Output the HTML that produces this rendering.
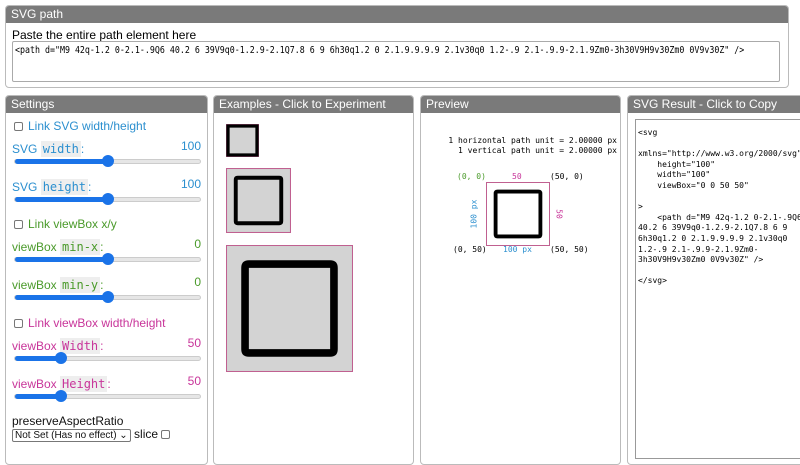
<!DOCTYPE html>
<html><head><style>
*{box-sizing:border-box}
body{margin:0;width:800px;height:450px;overflow:hidden;background:#fff;font-family:"Liberation Sans",sans-serif;font-size:12px;position:relative}
.panel{position:absolute;border:1px solid #bbb;border-radius:4px;background:#fff;overflow:hidden}
.hd{background:#7a7a7a;color:#fff;height:17px;line-height:17px;padding-left:5px;font-size:12px}
.mono{font-family:"DejaVu Sans Mono",monospace}
.row{position:absolute;left:6px;right:6px}
.lab{font-size:12px}
.code{font-family:"DejaVu Sans Mono",monospace;background:#eee;padding:1px 2px}
.val{position:absolute;right:0;top:-3px}
.sl{position:absolute;left:2px;right:0;top:17px;height:5px;background:#e6e6e6;border:1px solid #ccc;border-radius:3px}
.sl i{position:absolute;left:0;top:-1px;height:5px;background:#1a73e8;border-radius:3px}
.sl b{position:absolute;top:-5px;width:12px;height:12px;border-radius:50%;background:#1a73e8;margin-left:-6px}
.cb{display:inline-block;width:9px;height:9px;border:1px solid #777;border-radius:2px;vertical-align:-1px;margin-right:5px;margin-left:2px}
.pl{position:absolute;font-family:"DejaVu Sans Mono",monospace;font-size:8px;white-space:nowrap;transform-origin:center}
</style></head><body>
<div class="panel" style="left:5px;top:5px;width:784px;height:83px">
<div class="hd">SVG path</div>
<div style="position:absolute;left:6px;top:22px;font-size:12px">Paste the entire path element here</div>
<div class="mono" style="position:absolute;left:6px;top:35px;width:768px;height:41px;border:1px solid #aaa;border-radius:2px;font-size:8.3px;padding:2px 2px;white-space:nowrap"><span style="display:inline-block;transform:scaleY(1.15);transform-origin:top left">&lt;path d="M9 42q-1.2 0-2.1-.9Q6 40.2 6 39V9q0-1.2.9-2.1Q7.8 6 9 6h30q1.2 0 2.1.9.9.9.9 2.1v30q0 1.2-.9 2.1-.9.9-2.1.9Zm0-3h30V9H9v30Zm0 0V9v30Z" /&gt;</span></div>
</div>

<div class="panel" style="left:5px;top:95px;width:203px;height:370px">
<div class="hd">Settings</div>
<div class="row" style="top:23px;color:#2b8fcf"><span class="cb"></span>Link SVG width/height</div>
<div class="row" style="top:46px;color:#2b8fcf"><span class="lab">SVG <span class="code">width</span>:</span><span class="val">100</span><div class="sl"><i style="width:50%"></i><b style="left:50%"></b></div></div>
<div class="row" style="top:84px;color:#2b8fcf"><span class="lab">SVG <span class="code">height</span>:</span><span class="val">100</span><div class="sl"><i style="width:50%"></i><b style="left:50%"></b></div></div>
<div class="row" style="top:121px;color:#4a9a2a"><span class="cb"></span>Link viewBox x/y</div>
<div class="row" style="top:144px;color:#4a9a2a"><span class="lab">viewBox <span class="code">min-x</span>:</span><span class="val">0</span><div class="sl"><i style="width:50%"></i><b style="left:50%"></b></div></div>
<div class="row" style="top:182px;color:#4a9a2a"><span class="lab">viewBox <span class="code">min-y</span>:</span><span class="val">0</span><div class="sl"><i style="width:50%"></i><b style="left:50%"></b></div></div>
<div class="row" style="top:220px;color:#c8359a"><span class="cb"></span>Link viewBox width/height</div>
<div class="row" style="top:243px;color:#c8359a"><span class="lab">viewBox <span class="code">Width</span>:</span><span class="val">50</span><div class="sl"><i style="width:25%"></i><b style="left:25%"></b></div></div>
<div class="row" style="top:281px;color:#c8359a"><span class="lab">viewBox <span class="code">Height</span>:</span><span class="val">50</span><div class="sl"><i style="width:25%"></i><b style="left:25%"></b></div></div>
<div class="row" style="top:318px;color:#111">preserveAspectRatio</div>
<div class="row" style="top:331px;color:#111"><span style="display:inline-block;border:1px solid #777;border-radius:2px;font-size:10px;padding:0 2px">Not Set (Has no effect) ⌄</span> slice <span class="cb" style="margin:0"></span></div>
</div>

<div class="panel" style="left:213px;top:95px;width:201px;height:370px">
<div class="hd">Examples - Click to Experiment</div>
<svg style="position:absolute;left:12px;top:28px" width="33" height="33" viewBox="0 0 50 50"><rect x="0.5" y="0.5" width="49" height="49" fill="#d3d3d3" stroke="#c06090" stroke-width="1.5"/><path d="M3 3h44v44H3z" fill="none" stroke="#000" stroke-width="5"/></svg>
<svg style="position:absolute;left:12px;top:72px" width="65" height="65" viewBox="0 0 50 50"><rect x="0.4" y="0.4" width="49.2" height="49.2" fill="#d3d3d3" stroke="#c06090" stroke-width="0.8"/><path fill-rule="evenodd" d="M9 6h32q3 0 3 3v32q0 3-3 3H9q-3 0-3-3V9q0-3 3-3zM9 9v32h32V9z"/></svg>
<svg style="position:absolute;left:12px;top:149px" width="127" height="127" viewBox="0 0 50 50"><rect x="0.2" y="0.2" width="49.6" height="49.6" fill="#d3d3d3" stroke="#c06090" stroke-width="0.4"/><path fill-rule="evenodd" d="M9 6h32q3 0 3 3v32q0 3-3 3H9q-3 0-3-3V9q0-3 3-3zM9 9v32h32V9z"/></svg>
</div>

<div class="panel" style="left:420px;top:95px;width:201px;height:370px">
<div class="hd">Preview</div>
<div class="pl" style="right:3px;top:40px;text-align:right;line-height:10px;white-space:pre">1 horizontal path unit = 2.00000 px
1 vertical path unit = 2.00000 px</div>
<div class="pl" style="left:36px;top:76px;color:#4a9a2a">(0, 0)</div>
<div class="pl" style="left:91px;top:76px;color:#c8359a">50</div>
<div class="pl" style="left:129px;top:76px">(50, 0)</div>
<div class="pl" style="left:53px;top:118px;color:#2b8fcf;transform:translate(-50%,-50%) rotate(-90deg)">100 px</div>
<div class="pl" style="left:138px;top:118px;color:#c8359a;transform:translate(-50%,-50%) rotate(90deg)">50</div>
<div style="position:absolute;left:65px;top:86px;width:64px;height:64px;border:1px solid #c06090"></div>
<svg style="position:absolute;left:65px;top:86px" width="64" height="64" viewBox="0 0 50 50"><path fill-rule="evenodd" d="M9 6h32q3 0 3 3v32q0 3-3 3H9q-3 0-3-3V9q0-3 3-3zM9 9v32h32V9z"/></svg>
<div class="pl" style="left:32px;top:149px">(0, 50)</div>
<div class="pl" style="left:82px;top:149px;color:#2b8fcf">100 px</div>
<div class="pl" style="left:129px;top:149px">(50, 50)</div>
</div>

<div class="panel" style="left:627px;top:95px;width:190px;height:370px">
<div class="hd">SVG Result - Click to Copy</div>
<div class="mono" style="position:absolute;left:7px;top:23px;width:190px;height:340px;border:1px solid #999;font-size:8px;line-height:10.6px;padding:8px 2px;white-space:pre">&lt;svg

xmlns="http://www.w3.org/2000/svg"
    height="100"
    width="100"
    viewBox="0 0 50 50"

&gt;
    &lt;path d="M9 42q-1.2 0-2.1-.9Q6
40.2 6 39V9q0-1.2.9-2.1Q7.8 6 9
6h30q1.2 0 2.1.9.9.9.9 2.1v30q0
1.2-.9 2.1-.9.9-2.1.9Zm0-
3h30V9H9v30Zm0 0V9v30Z" /&gt;

&lt;/svg&gt;</div>
</div>
</body></html>
